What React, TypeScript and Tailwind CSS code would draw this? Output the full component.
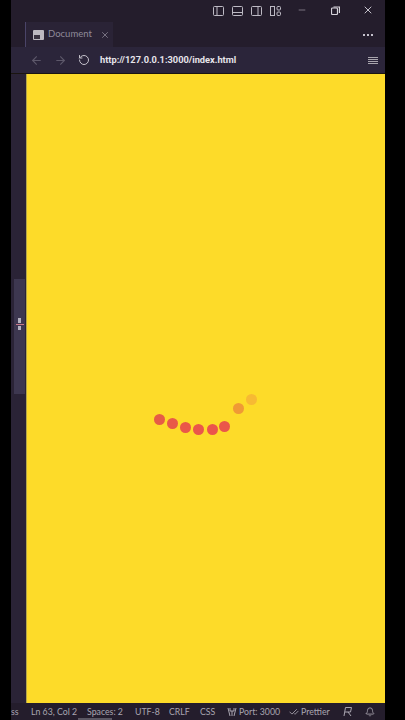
import { RotateCw, ArrowLeft, ArrowRight, X, Minus, Bell, CheckCheck } from "lucide-react";

const dots = [
  { x: 159, y: 419, color: "bg-[#e65c45]" },
  { x: 172, y: 423, color: "bg-[#e85a48]" },
  { x: 185, y: 427, color: "bg-[#ea5749]" },
  { x: 198, y: 429, color: "bg-[#ea564a]" },
  { x: 212, y: 429.5, color: "bg-[#eb554b]" },
  { x: 224.5, y: 426.5, color: "bg-[#ea574a]" },
  { x: 238.5, y: 408.5, color: "bg-[#f09a35]" },
  { x: 251.5, y: 399, color: "bg-[#f7ba33]" },
];

function LayoutIcon({ kind }: { kind: "left" | "bottom" | "right" }) {
  return (
    <svg width="11" height="10" viewBox="0 0 11 10" fill="none" stroke="#bdbac4" strokeWidth="1">
      <rect x="0.5" y="0.5" width="10" height="9" rx="1" />
      {kind === "left" && <path d="M4 1v8" />}
      {kind === "right" && <path d="M7 1v8" />}
      {kind === "bottom" && <path d="M1 6.5h9" />}
    </svg>
  );
}

export default function App() {
  return (
    <div className="w-[405px] h-[720px] bg-black flex overflow-hidden font-['Lato',sans-serif] relative">
      <div className="w-[11px] shrink-0" />
      <div className="w-[374px] shrink-0 flex flex-col bg-[#241d2c]">
        {/* Title bar */}
        <div className="h-[22px] flex items-center justify-end shrink-0">
          <div className="flex items-center gap-[8px] mr-[104px]">
            <LayoutIcon kind="left" />
            <LayoutIcon kind="bottom" />
            <LayoutIcon kind="right" />
            <svg width="11" height="10" viewBox="0 0 11 10" fill="none" stroke="#bdbac4" strokeWidth="1">
              <rect x="0.5" y="0.5" width="4" height="9" />
              <rect x="7" y="0.5" width="3.5" height="3.5" rx="1" />
              <rect x="7" y="6" width="3.5" height="3.5" rx="1" />
            </svg>
          </div>
        </div>
        {/* Tabs */}
        <div className="h-[25px] flex shrink-0 pl-[14px] pr-[12px] items-center justify-between">
          <div className="h-full w-[88px] bg-[#2a2336] border-l border-[#4a4468] flex items-center pl-[7px] gap-[4px]">
            <div className="w-[11px] h-[10px] rounded-[1px] bg-[#bdb9c2] flex items-end p-[1px]">
              <div className="w-[6px] h-[4px] bg-[#3a3342]" />
            </div>
            <span className="text-[9.5px] text-[#8f8a99]">Document</span>
            <X size={10} className="text-[#85808f] ml-[4px]" />
          </div>
          <div className="flex gap-[2px]">
            <div className="w-[2px] h-[2px] bg-[#c5c2cc]" />
            <div className="w-[2px] h-[2px] bg-[#c5c2cc]" />
            <div className="w-[2px] h-[2px] bg-[#c5c2cc]" />
          </div>
        </div>
        {/* Browser toolbar */}
        <div className="h-[27px] bg-[#2b253a] shrink-0 flex items-center pl-[19px] pr-[7px] border-b border-[#1a1510]">
          <ArrowLeft size={13} className="text-[#5d586a]" />
          <ArrowRight size={13} className="text-[#5d586a] ml-[11px]" />
          <RotateCw size={12} className="text-[#c5c2cc] ml-[11px] -scale-x-100" />
          <span className="ml-[10px] text-[9.25px] font-bold font-['Roboto',sans-serif] text-[#e6e4ea]">http://127.0.0.1:3000/index.html</span>
          <div className="ml-auto w-[10px] flex flex-col gap-[1px]">
            <div className="h-[1px] bg-[#a8a5ad]" />
            <div className="h-[1px] bg-[#a8a5ad]" />
            <div className="h-[1px] bg-[#a8a5ad]" />
            <div className="h-[1px] bg-[#a8a5ad]" />
          </div>
        </div>
        {/* Body */}
        <div className="flex-1 flex min-h-0">
          <div className="w-[15px] shrink-0 bg-[#2a2336] pt-[205px] pl-[3px]">
            <div className="w-[11px] h-[115px] bg-[#3d3750] flex flex-col items-center pt-[39px] gap-[1px]">
              <div className="w-[3px] h-[5px] bg-[#b5b1bf]" />
              <div className="w-[8px] h-[1px] bg-[#c9798a]" />
              <div className="w-[3px] h-[4px] bg-[#b5b1bf]" />
            </div>
          </div>
          <div className="flex-1 bg-[#fddb29] border-l border-[#b5a64a]" />
        </div>
        {/* Status bar */}
        <div className="h-[17px] bg-[#241d2c] shrink-0 flex items-center text-[8.75px] text-[#a9a5b0] whitespace-nowrap relative">
          <span className="w-[20px]">ss</span>
          <span className="w-[56px]">Ln 63, Col 2</span>
          <span className="w-[48px]">Spaces: 2</span>
          <span className="w-[34px]">UTF-8</span>
          <span className="w-[31px]">CRLF</span>
          <span className="w-[27px]">CSS</span>
          <svg width="10" height="10" viewBox="0 0 10 10" fill="none" stroke="#a9a5b0" strokeWidth="1" className="mr-[2px]">
            <path d="M1 1l2 8M9 1L7 9M3 1v3h4V1M5 4v5" />
          </svg>
          <span className="w-[50px]">Port: 3000</span>
          <CheckCheck size={10} className="mr-[2px]" />
          <span className="w-[41px]">Prettier</span>
          <svg width="11" height="11" viewBox="0 0 11 11" fill="none" stroke="#a9a5b0" strokeWidth="1">
            <path d="M2 10L3.5 1.5h6L8.5 6H3M6 6l3 4" />
          </svg>
          <Bell size={10} className="ml-[12px]" />
          <div className="absolute bottom-0 left-[67px] w-[34px] h-[2px] bg-[#5a5663]" />
        </div>
      </div>
      {/* Window controls */}
      <Minus size={10} className="absolute left-[297px] top-[5px] text-[#8a8691]" />
      <svg width="9" height="9" viewBox="0 0 9 9" fill="none" stroke="#d5d2da" strokeWidth="1.2" className="absolute left-[331px] top-[6px]">
        <rect x="0.5" y="2" width="6" height="6.5" rx="1" />
        <path d="M2.5 1h6v6" />
      </svg>
      <X size={12} className="absolute left-[362px] top-[4px] text-[#c5c2cc]" />
      {/* Loader dots */}
      {dots.map((d, i) => (
        <div
          key={i}
          className={`absolute w-[11px] h-[11px] rounded-full ${d.color}`}
          style={{ left: d.x - 5.5, top: d.y - 5.5 }}
        />
      ))}
    </div>
  );
}
